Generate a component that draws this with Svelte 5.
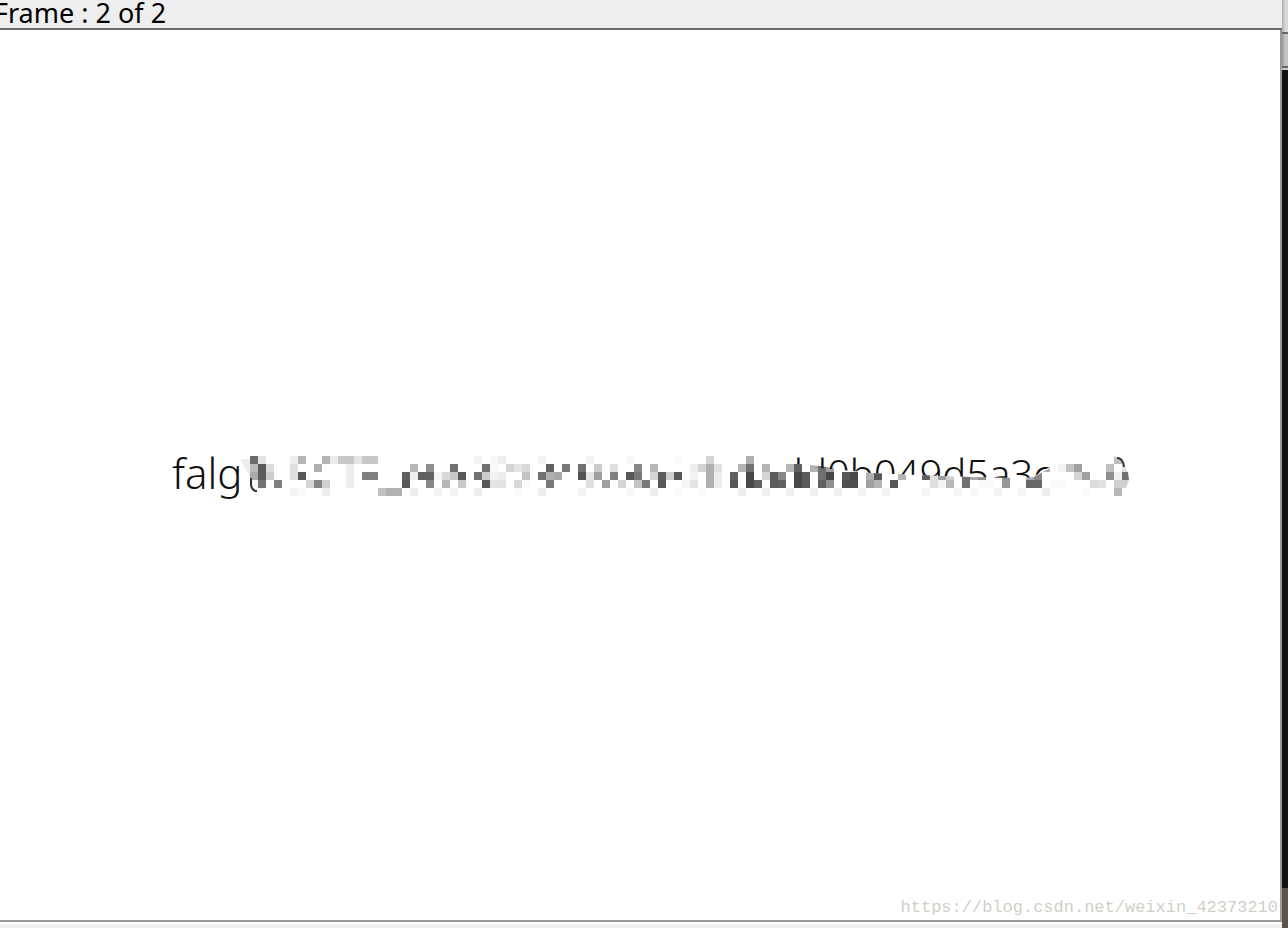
<script>
  const frame = 2;
  const total = 2;

  const cell = 8;

  // one entry per column of the mosaic: "row:grey level"
  const columns = [
    "0:6b 1:bb 2:aa 3:f8", "0:e4 1:5c 2:5c 3:74", "1:dd 2:cc", "3:80", "",
    "0:ee 1:e0 2:e0 4:f4", "0:b5 2:58 4:fa", "3:d4", "1:b0 3:84", "0:b5 3:d0 4:ee",
    "0:eb", "0:c8", "0:c8 1:ed 2:ed 3:ed", "0:e4", "0:c8 2:80",
    "0:c8 2:80", "4:c0", "4:b0", "4:b0", "2:60 3:58",
    "1:b8 2:ee 4:ee", "2:60", "1:90 2:60 3:88", "2:f4 4:f4", "2:d8 3:b8",
    "1:70 2:c8 4:f2", "2:58 3:c8", "", "0:f2 2:70 4:ee", "1:70 2:cc 3:58",
    "0:f7 1:f8 2:f2 3:e4", "0:ee 2:ee 3:e2", "1:d4", "1:e4 3:d8 4:fa", "1:d8 2:c4 3:fa",
    "", "0:f4 2:70 4:ee", "1:60 2:b0 3:78", "2:a8", "1:78",
    "", "1:70 2:54 4:f4", "0:f4 2:e4 3:e0", "1:cc 2:a0", "3:a0",
    "1:e0 2:80", "3:d4", "0:f8 2:58 4:f8", "1:88 2:78 3:c4", "3:78",
    "1:b8 2:d4 4:ee", "2:5c 3:58", "2:d0", "0:fa 2:58 4:fa", "3:f6",
    "1:ee 2:f4 3:e4", "1:d4 4:fa", "0:d4 1:b0 2:b0 3:b0", "1:e0 2:ec 3:ec", "",
    "2:60 3:58", "1:b4 4:ee", "0:b0 1:70 2:48 3:48", "3:60", "1:b4 2:d4 4:f0",
    "2:5c 3:5c", "2:88 3:60", "1:b8 4:f0", "1:60 2:48 3:48", "2:5c 3:58",
    "1:b4 4:f0", "1:70 2:70 3:60", "1:a0 2:48 3:90", "4:f0", "2:58 3:50",
    "2:48 3:50", "4:f2", "2:b0 3:a0", "2:58 3:b4", "4:f4",
    "3:58", "2:b4", "", "", "2:60 4:f6",
    "2:e0 3:e0", "2:a0 3:f4", "2:d0 3:b8", "4:f6", "2:70 3:70",
    "2:aa 4:f8", "2:90 3:fa", "3:fa", "2:f4 4:f4", "2:90 3:98",
    "", "4:f6", "2:aa 3:68", "1:b0 2:88 3:68", "1:b0 4:ee",
    "3:fa", "1:f2 3:fa", "1:c4", "1:a0 2:d4", "2:a0 4:fa",
    "3:dc", "3:e2", "1:c0 2:90", "0:c0 2:f0 3:d0 4:b8", "1:e0 2:70 3:d0",
  ];

  const tiles = columns.flatMap((col, x) =>
    col.split(" ").filter(Boolean).map((part) => {
      const [row, grey] = part.split(":");
      return { x: 78 + x * cell, y: 6 + row * cell, fill: "#" + grey.repeat(3) };
    })
  );
</script>

<div class="screen">
  <div class="window">
    <header>Frame : {frame} of {total}</header>
    <main>
      <div class="canvas">
        <svg class="picture" width="960" height="50" viewBox="0 0 960 50" role="img" aria-label="Frame {frame}">
          <defs>
            <clipPath id="tail">
              <path d="M620 0H878V17L870 21L862 27L850 28L800 27L745 25L700 23L680 21L648 18L628 14H620Z" />
            </clipPath>
            <clipPath id="mosaic">
              <path d="M78 6H628V14L648 16L680 21L700 23L745 25L800 27L850 28L862 27L878 18V11H942V6L950 11L956 22L957 30L954 38L950 46H78Z" />
            </clipPath>
          </defs>
          <text x="0" y="39">falg</text>
          <path class="smear" d="M68 9H78V28Z" />
          <g clip-path="url(#mosaic)" shape-rendering="crispEdges">
            {#each tiles as tile}
              <rect x={tile.x} y={tile.y} width={cell} height={cell} fill={tile.fill} />
            {/each}
          </g>
          <path class="stroke" d="M79 28V35Q80 41 85 41" />
          <g clip-path="url(#tail)">
            <text class="rest" x="607" y="39">dd0b049d5a3c</text>
          </g>
          <path class="stroke" d="M945 8Q951 8 952 17" />
        </svg>
      </div>
      <p class="watermark">https://blog.csdn.net/weixin_42373210</p>
    </main>
    <footer></footer>
  </div>
  <div class="behind">
    <div class="bar"></div>
    <div class="bar second"></div>
    <div class="dark"></div>
    <div class="desk"></div>
  </div>
</div>

<style>
:global(body) {
  margin: 0;
}

.screen {
  display: flex;
  height: 100vh;
  overflow: hidden;
  background: #fff;
}

.window {
  flex: 1;
  display: flex;
  flex-direction: column;
  min-width: 0;
}

header {
  height: 28px;
  margin-left: -6px;
  border-bottom: 2px solid #696969;
  background: #eee;
  color: #000;
  font: 27px/26px "Noto Sans", sans-serif;
  white-space: nowrap;
}

main {
  flex: 1;
  display: flex;
  flex-direction: column;
  border-right: 2px solid #999;
  border-bottom: 2px solid #999;
}

.canvas {
  flex: 1;
  display: flex;
  align-items: center;
  justify-content: center;
  padding: 24px 0 0 24px;
}

.picture {
  overflow: visible;
}

.picture text {
  font: 300 42px "Noto Sans", sans-serif;
  fill: #111;
}

.picture .rest {
  font-size: 40px;
}

.smear {
  fill: #eee;
}

.stroke {
  fill: none;
  stroke: #333;
  stroke-width: 2;
}

.watermark {
  margin: 0;
  padding-right: 2px;
  color: #d0d0c8;
  font: 17px/24px "Liberation Mono", monospace;
  text-align: right;
}

footer {
  height: 4px;
  margin-top: 2px;
  background: #eee;
}

.behind {
  width: 6px;
  display: flex;
  flex-direction: column;
}

.bar {
  height: 32px;
  border-bottom: 2px solid #666;
  background: linear-gradient(90deg, #aaa, #d8d8d8 50%);
}

.second {
  background: linear-gradient(90deg, #999, #c4c4c4 50%);
}

.dark {
  flex: 1;
  border-top: 2px solid #ccc;
  background: #111313;
}

.desk {
  height: 40px;
  background: #5c544c;
}
</style>
